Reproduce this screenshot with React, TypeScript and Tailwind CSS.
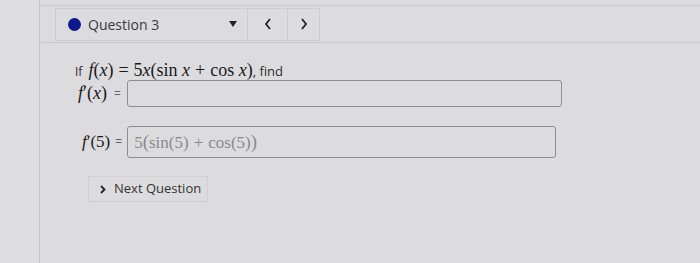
import React from "react";

const sans = { fontFamily: '"Open Sans", "Liberation Sans", sans-serif' };
const serif = { fontFamily: '"Liberation Serif", "DejaVu Serif", serif' };

function M({ children }: { children: React.ReactNode }) {
  return <span className="italic">{children}</span>;
}

function Op({ children }: { children: React.ReactNode }) {
  return <span className="mx-[5px]">{children}</span>;
}

export default function App() {
  return (
    <div
      className="w-[700px] h-[263px] overflow-hidden bg-[#dcdcde] flex text-[#2d2d2d]"
      style={sans}
    >
      <div className="w-[40px] shrink-0 border-r border-[#c4c4c6] bg-[#dfdfe1]" />
      <div className="flex-1 flex flex-col">
        {/* header */}
        <div className="mt-[5px] h-[38px] border-t border-b border-[#cacacc] flex items-center">
          <div className="ml-[15px] w-[265px] h-[33px] border border-[#cdcdcf] flex">
            <div className="flex-1 flex items-center pl-[12px]">
              <span className="w-[13px] h-[13px] rounded-full bg-[#0b1a8e]" />
              <span className="ml-[7px] text-[14px] text-[#3a3a3a]">Question 3</span>
              <span className="ml-auto mr-[10px]">
                <svg width="8" height="6" viewBox="0 0 8 6">
                  <path d="M0 0 L8 0 L4 6 Z" fill="#222" />
                </svg>
              </span>
            </div>
            <div className="w-[40px] border-l border-[#cdcdcf] flex items-center justify-center">
              <svg width="8" height="12" viewBox="0 0 8 12">
                <path d="M6 1 L2 6 L6 11" fill="none" stroke="#222" strokeWidth="1.8" />
              </svg>
            </div>
            <div className="w-[32px] border-l border-[#cdcdcf] flex items-center justify-center">
              <svg width="8" height="12" viewBox="0 0 8 12">
                <path d="M2 1 L6 6 L2 11" fill="none" stroke="#222" strokeWidth="1.8" />
              </svg>
            </div>
          </div>
        </div>

        {/* body */}
        <div className="pl-[35px] pt-[14px] flex flex-col">
          <div className="flex items-baseline h-[22px]">
            <span className="text-[12px] mr-[6px]">If</span>
            <span className="text-[18px] text-[#1a1a1a]" style={serif}>
              <M>f</M>(<M>x</M>)<Op>=</Op>5<M>x</M>(sin <M>x</M><Op>+</Op>cos <M>x</M>)
            </span>
            <span className="text-[13px]">, find</span>
          </div>
          <div className="flex items-center mt-[1px]">
            <span className="text-[18px] text-[#1a1a1a] ml-[3px]" style={serif}>
              <M>f</M>′(<M>x</M>)
            </span>
            <span className="text-[12px] text-[#666] ml-[7px]">=</span>
            <div className="ml-[6px] w-[435px] h-[27px] border border-[#8e8e90] rounded-[3px]" />
          </div>
          <div className="flex items-center mt-[19px]">
            <span className="text-[17px] text-[#1a1a1a] ml-[7px]" style={serif}>
              <M>f</M>′(5)
            </span>
            <span className="text-[12px] text-[#666] ml-[5px]">=</span>
            <div
              className="ml-[5px] w-[429px] h-[32px] border border-[#8e8e90] rounded-[3px] flex items-center pl-[6px] text-[17px] text-[#8a8a8c]"
              style={serif}
            >
              <span>
                5<span className="text-[19px]">(</span>sin(5)<span className="mx-[5px]">+</span>cos(5)<span className="text-[19px]">)</span>
              </span>
            </div>
          </div>
          <div className="mt-[18px] ml-[13px] w-[120px] h-[26px] border border-[#d0d0d2] flex items-center pl-[11px]">
            <svg width="6" height="9" viewBox="0 0 6 9">
              <path d="M1 1 L4.5 4.5 L1 8" fill="none" stroke="#222" strokeWidth="1.8" />
            </svg>
            <span className="ml-[8px] text-[13px] text-[#333]">Next Question</span>
          </div>
        </div>
      </div>
    </div>
  );
}
